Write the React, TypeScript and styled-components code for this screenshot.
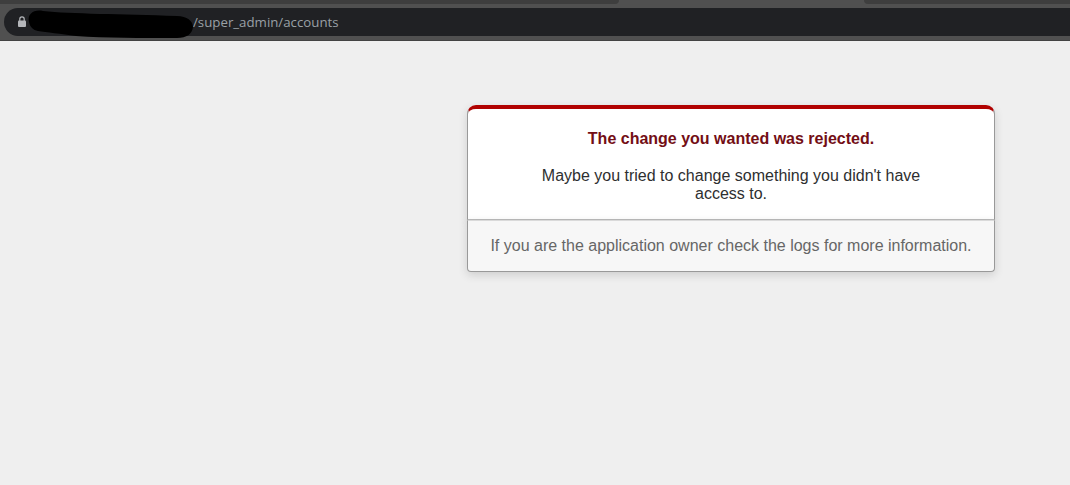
import React from "react";
import styled, { createGlobalStyle } from "styled-components";

const Global = createGlobalStyle`
  html, body { margin: 0; padding: 0; height: 100%; background: #efefef; overflow: hidden; }
  #root { min-height: 100%; }
`;

const Page = styled.div`
  width: 1070px;
  height: 485px;
  background: #efefef;
  display: flex;
  flex-direction: column;
  overflow: hidden;
`;

const BrowserChrome = styled.header`
  height: 41px;
  flex: none;
  box-sizing: border-box;
  background: #505050;
  border-bottom: 1px solid #434343;
  display: flex;
  flex-direction: column;
`;

const TabStrip = styled.div`
  height: 4px;
  flex: none;
  display: flex;
  justify-content: space-between;
`;

const TabEdge = styled.div<{ $width: number; $side: "left" | "right" }>`
  width: ${(p) => p.$width}px;
  height: 4px;
  background: #3e3e3e;
  border-bottom-${(p) => p.$side === "left" ? "right" : "left"}-radius: 6px;
`;

const Omnibox = styled.div`
  position: relative;
  height: 28px;
  margin: 4px 0 0 4px;
  background: #202124;
  border-radius: 14px 0 0 14px;
  display: flex;
  align-items: center;
  padding-left: 14px;
`;

const Lock = styled.svg`
  width: 8px;
  height: 11px;
  flex: none;
  margin-right: 167px;
  margin-top: -1px;
  display: block;
`;

const UrlPath = styled.span`
  font-family: "Open Sans", sans-serif;
  font-size: 13.28px;
  color: #9aa0a6;
  line-height: 28px;
`;

const Scribble = styled.svg`
  position: absolute;
  left: 17px;
  top: -2px;
  width: 175px;
  height: 32px;
`;

const Dialog = styled.main`
  width: 528px;
  margin: 64px 0 0 467px;
  font-family: "Liberation Sans", Arial, sans-serif;
  font-size: 16px;
  text-align: center;
  color: #2e2f30;
`;

const DialogBody = styled.div`
  box-sizing: border-box;
  border: 1px solid #ccc;
  border-left-color: #999;
  border-right-color: #999;
  border-bottom-color: #bbb;
  border-top: 4px solid #b00100;
  border-top-left-radius: 9px;
  border-top-right-radius: 9px;
  background: #fff;
  padding: 7px 12% 0;
  box-shadow: 0 3px 8px rgba(50, 50, 50, 0.17);
`;

const Title = styled.h1`
  font-size: 100%;
  font-weight: bold;
  color: #730e15;
  line-height: 1.5em;
  margin: 0;
  padding: 11px 0 0;
`;

const Message = styled.p`
  margin: 16px 0;
  line-height: 18px;
`;

const Footer = styled.p`
  margin: 0 0 1em;
  padding: 1em;
  background: #f7f7f7;
  border: 1px solid #999;
  border-top-color: #dadada;
  border-bottom-left-radius: 4px;
  border-bottom-right-radius: 4px;
  color: #666;
  box-shadow: 0 3px 8px rgba(50, 50, 50, 0.17);
  line-height: 18px;
`;

export default function App() {
  return (
    <>
      <Global />
      <Page>
        <BrowserChrome>
          <TabStrip>
            <TabEdge $width={619} $side="left" />
            <TabEdge $width={206} $side="right" />
          </TabStrip>
          <Omnibox>
            <Lock viewBox="0 0 8 11" aria-hidden="true">
              <path
                d="M1.8 5V3a2.2 2.2 0 0 1 4.4 0V5"
                fill="none"
                stroke="#b4b6ba"
                strokeWidth="1.2"
              />
              <rect x="0" y="4.5" width="8" height="6.5" rx="1" fill="#b4b6ba" />
            </Lock>
            <UrlPath>/super_admin/accounts</UrlPath>
            <Scribble viewBox="0 0 175 32" aria-hidden="true">
              <path
                d="M8 16C6 8 13 3 22 5C50 8 100 8 156 10C166 10 172 15 172 21C171 28 166 32 156 32C120 32 85 32 55 30C40 28 25 26 17 25C12 24 9 21 8 16Z"
                fill="#000"
              />
            </Scribble>
          </Omnibox>
        </BrowserChrome>
        <Dialog>
          <DialogBody>
            <Title>The change you wanted was rejected.</Title>
            <Message>Maybe you tried to change something you didn't have access to.</Message>
          </DialogBody>
          <Footer>If you are the application owner check the logs for more information.</Footer>
        </Dialog>
      </Page>
    </>
  );
}
